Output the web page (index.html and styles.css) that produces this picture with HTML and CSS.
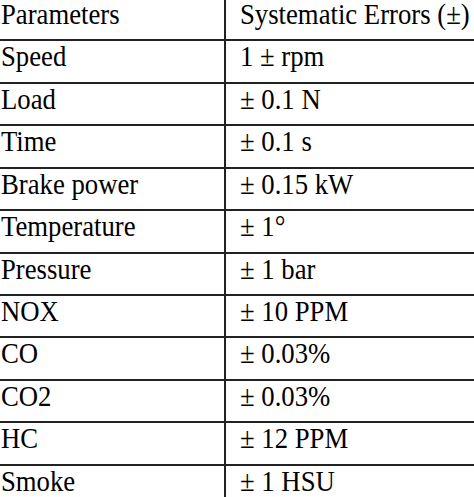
FILE: index.html
```
<!DOCTYPE html>
<html>
<head>
<meta charset="utf-8">
<link rel="stylesheet" href="styles.css">
</head>
<body>
<div class="table">
  <div class="row"><div class="c1"><span class="t">Parameters</span></div><div class="c2"><span class="t">Systematic Errors (±)</span></div></div>
  <div class="row"><div class="c1"><span class="t">Speed</span></div><div class="c2"><span class="t">1 ± rpm</span></div></div>
  <div class="row"><div class="c1"><span class="t">Load</span></div><div class="c2"><span class="t">± 0.1 N</span></div></div>
  <div class="row"><div class="c1"><span class="t">Time</span></div><div class="c2"><span class="t">± 0.1 s</span></div></div>
  <div class="row"><div class="c1"><span class="t">Brake power</span></div><div class="c2"><span class="t">± 0.15 kW</span></div></div>
  <div class="row"><div class="c1"><span class="t">Temperature</span></div><div class="c2"><span class="t">± 1°</span></div></div>
  <div class="row"><div class="c1"><span class="t">Pressure</span></div><div class="c2"><span class="t">± 1 bar</span></div></div>
  <div class="row"><div class="c1"><span class="t">NOX</span></div><div class="c2"><span class="t">± 10 PPM</span></div></div>
  <div class="row"><div class="c1"><span class="t">CO</span></div><div class="c2"><span class="t">± 0.03%</span></div></div>
  <div class="row"><div class="c1"><span class="t">CO2</span></div><div class="c2"><span class="t">± 0.03%</span></div></div>
  <div class="row"><div class="c1"><span class="t">HC</span></div><div class="c2"><span class="t">± 12 PPM</span></div></div>
  <div class="row"><div class="c1"><span class="t">Smoke</span></div><div class="c2"><span class="t">± 1 HSU</span></div></div>
</div>
</body>
</html>
```
FILE: styles.css
```
html, body {
  margin: 0;
  padding: 0;
  background: #fff;
  overflow: hidden;
}
.table {
  margin-top: -1.1px;
  width: 474px;
  font-family: "Liberation Serif", "Times New Roman", serif;
  font-size: 30px;
  line-height: 30px;
  color: #000;
}
.row {
  display: flex;
  height: 42.44px;
  box-sizing: border-box;
  border-bottom: 2px solid #222;
}
.c1 {
  flex: 0 0 226px;
  width: 226px;
  box-sizing: border-box;
  border-right: 2px solid #222;
  padding-left: 1px;
  white-space: nowrap;
}
.c2 {
  flex: 1 1 0;
  min-width: 0;
  padding-left: 14px;
  white-space: nowrap;
}
.t {
  display: inline-block;
  transform: scaleX(0.89);
  transform-origin: left center;
}
```
